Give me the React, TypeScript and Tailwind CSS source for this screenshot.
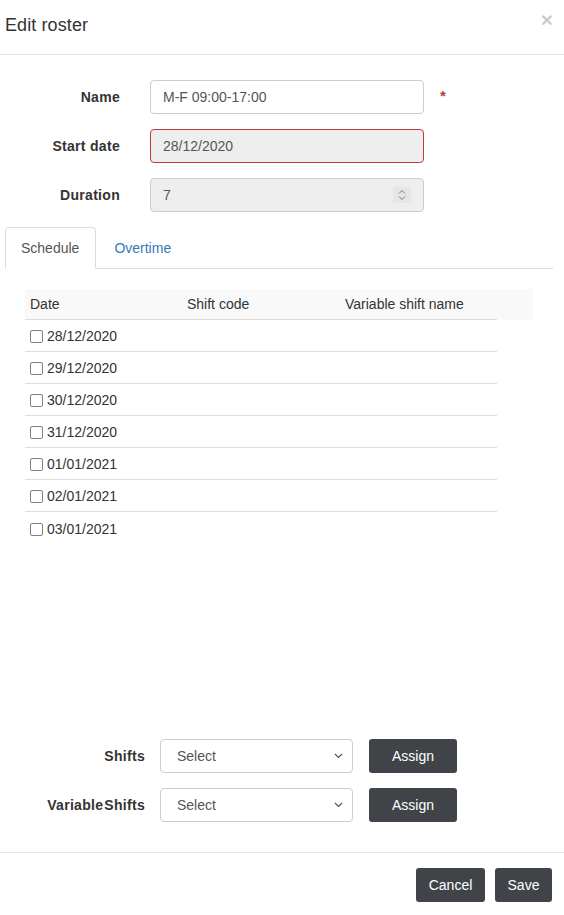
import { useState } from 'react';

const dates = ['28/12/2020', '29/12/2020', '30/12/2020', '31/12/2020', '01/01/2021', '02/01/2021', '03/01/2021'];

function Chevron() {
  return (
    <svg width="9" height="6" viewBox="0 0 9 6" fill="none" stroke="#555" strokeWidth="1.2">
      <path d="M1 1l3.5 3.5L8 1" />
    </svg>
  );
}

function FakeSelect() {
  return (
    <div className="w-[193px] h-[34px] border border-[#ccc] rounded-[4px] bg-white flex items-center justify-between pl-4 pr-[9px] text-[#555]">
      <span>Select</span>
      <Chevron />
    </div>
  );
}

export default function App() {
  const [tab, setTab] = useState<'schedule' | 'overtime'>('schedule');

  return (
    <div className="w-[564px] min-h-[915px] bg-white text-[14px] text-[#333] font-['Liberation_Sans',Arial,sans-serif]">
      {/* Header */}
      <div className="h-[55px] border-b border-[#e5e5e5] flex justify-between items-start pl-[5px] pr-[11px]">
        <h4 className="pt-[15px] text-[18px] leading-[20px] tracking-[0.1px]">Edit roster</h4>
        <button className="pt-[9px] text-[21px] font-bold leading-[21px] text-black opacity-20">×</button>
      </div>

      {/* Form */}
      <div className="pt-[25px] flex flex-col gap-[15px]">
        <div className="flex items-center h-[34px]">
          <label className="w-[120px] text-right font-bold tracking-[0.3px]">Name</label>
          <div className="ml-[30px] w-[274px] h-[34px] border border-[#ccc] rounded-[4px] px-3 flex items-center text-[#555]">
            M-F 09:00-17:00
          </div>
          <span className="ml-[16px] -mt-[2px] text-[15px] font-bold text-[#a94442]">*</span>
        </div>
        <div className="flex items-center h-[34px]">
          <label className="w-[120px] text-right font-bold tracking-[0.3px]">Start date</label>
          <div className="ml-[30px] w-[274px] h-[34px] border border-[#c0393b] bg-[#eee] rounded-[4px] px-3 flex items-center text-[#555]">
            28/12/2020
          </div>
        </div>
        <div className="flex items-center h-[34px]">
          <label className="w-[120px] text-right font-bold tracking-[0.3px]">Duration</label>
          <div className="ml-[30px] w-[274px] h-[34px] border border-[#ccc] bg-[#eee] rounded-[4px] pl-3 pr-[12px] flex items-center justify-between text-[#555]">
            <span>7</span>
            <span className="w-[18px] h-[16px] bg-[#e6e6ea] flex items-center justify-center">
              <svg width="8" height="12" viewBox="0 0 8 12" fill="none" stroke="#777" strokeWidth="1">
                <path d="M1 4.5l3-3 3 3M1 7.5l3 3 3-3" />
              </svg>
            </span>
          </div>
        </div>
      </div>

      {/* Tabs */}
      <div className="mt-[15px] ml-[5px] w-[548px] flex border-b border-[#ddd] h-[42px]">
        <button
          onClick={() => setTab('schedule')}
          className={`h-[42px] pl-[15px] pr-[16px] mr-[2px] rounded-t-[4px] border ${
            tab === 'schedule' ? 'border-[#ddd] border-b-white bg-white text-[#555]' : 'border-transparent text-[#337ab7]'
          }`}
        >
          Schedule
        </button>
        <button
          onClick={() => setTab('overtime')}
          className={`h-[42px] px-[15px] rounded-t-[4px] border ${
            tab === 'overtime' ? 'border-[#ddd] border-b-white bg-white text-[#555]' : 'border-transparent text-[#337ab7]'
          }`}
        >
          Overtime
        </button>
      </div>

      {/* Table */}
      <div className="mt-[20px] ml-[25px]">
        <div className="w-[508px] h-[31px] bg-[#f9f9f9]">
          <div className="w-[472px] h-[31px] border-b border-[#ddd] flex items-center">
            <div className="w-[157px] pl-[5px]">Date</div>
            <div className="w-[158px] pl-[5px]">Shift code</div>
            <div className="pl-[5px]">Variable shift name</div>
          </div>
        </div>
        <div className="w-[472px]">
          {dates.map((d, i) => (
            <div
              key={d}
              className={`h-[32px] flex items-center pl-[5px] pt-[2px] ${i < dates.length - 1 ? 'border-b border-[#ddd]' : ''}`}
            >
              <span className="w-[13px] h-[13px] border border-[#808080] rounded-[2px] bg-white" />
              <span className="ml-1">{d}</span>
            </div>
          ))}
        </div>
      </div>

      {/* Assign */}
      <div className="mt-[195px] flex flex-col gap-[15px]">
        <div className="flex items-center">
          <label className="w-[145px] text-right font-bold tracking-[0.3px]">Shifts</label>
          <div className="ml-[15px]"><FakeSelect /></div>
          <button className="ml-[16px] w-[88px] h-[34px] rounded-[3px] bg-[#404448] text-white">Assign</button>
        </div>
        <div className="flex items-center">
          <label className="w-[145px] text-right font-bold tracking-[0.3px]">Variable<span className="ml-[1px]">Shifts</span></label>
          <div className="ml-[15px]"><FakeSelect /></div>
          <button className="ml-[16px] w-[88px] h-[34px] rounded-[3px] bg-[#404448] text-white">Assign</button>
        </div>
      </div>

      {/* Footer */}
      <div className="mt-[30px] border-t border-[#e5e5e5] pt-[15px] pb-[13px] pr-[12px] flex justify-end gap-[10px]">
        <button className="w-[69px] h-[34px] rounded-[3px] bg-[#404448] text-white">Cancel</button>
        <button className="w-[57px] h-[34px] rounded-[3px] bg-[#404448] text-white">Save</button>
      </div>
    </div>
  );
}
